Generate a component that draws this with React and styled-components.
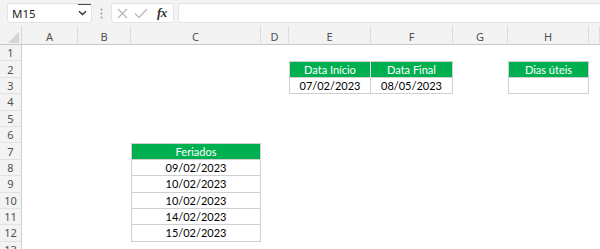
import React from "react";
import styled, { createGlobalStyle } from "styled-components";

const Global = createGlobalStyle`
  html, body { margin: 0; padding: 0; background: #ffffff; }
  body { width: 600px; height: 249px; overflow: hidden; font-family: "Noto Sans", "Open Sans", sans-serif; }
`;

const Page = styled.div`
  width: 600px;
  height: 249px;
  overflow: hidden;
  background: #ffffff;
`;

const Toolbar = styled.div`
  height: 26px;
  background: #f3f3f3;
  display: flex;
  align-items: flex-start;
  padding: 3px 0 0 7px;
  box-sizing: border-box;
  gap: 0;
`;

const NameBox = styled.div`
  position: relative;
  width: 85px;
  height: 20px;
  box-sizing: border-box;
  background: #ffffff;
  border: 1px solid #e3e3e3;
  border-radius: 3px;
  display: flex;
  align-items: center;
  justify-content: space-between;
  padding: 0 4px 0 4px;
  font-family: "Noto Sans", sans-serif;
  font-size: 11.5px;
  color: #262626;
`;

const NameTick = styled.div`
  position: absolute;
  top: 0;
  left: 70px;
  width: 13px;
  height: 1px;
  background: #4a4a4a;
`;

const Dots = styled.div`
  width: 19px;
  height: 20px;
  display: flex;
  align-items: center;
  justify-content: center;
`;

const FuncBox = styled.div`
  width: 63px;
  height: 20px;
  box-sizing: border-box;
  background: #ffffff;
  border: 1px solid #e3e3e3;
  border-radius: 3px;
  display: flex;
  align-items: center;
  padding: 0 0 0 5px;
  gap: 6px;
`;

const Fx = styled.span`
  font-family: "Liberation Serif", "DejaVu Serif", serif;
  font-style: italic;
  font-weight: bold;
  font-size: 13px;
  color: #333;
  margin-left: 3px;
  letter-spacing: -0.5px;
`;

const FormulaBar = styled.div`
  flex: 1;
  height: 20px;
  margin-left: 4px;
  box-sizing: border-box;
  background: #ffffff;
  border: 1px solid #e3e3e3;
  border-right: none;
  border-radius: 3px 0 0 3px;
`;

const Sheet = styled.div`
  display: grid;
  grid-template-columns: 22px 56px 53px 130px 28px 82px 82px 55px 81px 1fr;
  grid-template-rows: 19px repeat(13, 16.4px);
`;

const Corner = styled.div`
  background: #f3f3f3;
  border-bottom: 1px solid #c8c8c8;
  border-right: 1px solid #d6d6d6;
  box-sizing: border-box;
  display: flex;
  align-items: flex-end;
  justify-content: flex-end;
  padding: 0 2px 1px 0;
`;

const ColHead = styled.div`
  background: #f3f3f3;
  border-bottom: 1px solid #c8c8c8;
  border-right: 1px solid #dcdcdc;
  box-sizing: border-box;
  display: flex;
  align-items: center;
  justify-content: center;
  padding-top: 3px;
  font-family: "Noto Sans", sans-serif;
  font-size: 11px;
  color: #505050;
`;

const RowHead = styled.div`
  background: #f3f3f3;
  border-right: 1px solid #d0d0d0;
  border-bottom: 1px solid #e2e2e2;
  box-sizing: border-box;
  display: flex;
  align-items: center;
  justify-content: center;
  font-family: "Noto Sans", sans-serif;
  font-size: 11px;
  color: #505050;
`;

const Cell = styled.div`
  box-sizing: border-box;
  display: flex;
  align-items: center;
  justify-content: center;
  font-family: Lato, "Open Sans", sans-serif;
  font-size: 11px;
  white-space: nowrap;
  overflow: hidden;
  background: ${(p) => (p.$kind === "head" ? "#00b050" : "#ffffff")};
  color: ${(p) => (p.$kind === "head" ? "#ffffff" : "#000000")};
  ${(p) =>
    p.$kind
      ? `
    border-right: 1px solid ${p.$kind === "head" && !p.$lastCol ? "#e8f5ec" : "#d0d0d0"};
    border-bottom: 1px solid #d0d0d0;
    ${p.$firstCol ? "border-left: 1px solid #d0d0d0;" : ""}
    ${p.$firstRow ? "border-top: 1px solid #d0d0d0;" : ""}
  `
      : ""}
`;

const cols = ["A", "B", "C", "D", "E", "F", "G", "H", ""];

// content keyed by "col-row"
const data = {
  "E-2": { t: "Data Início", k: "head", fr: true, fc: true },
  "F-2": { t: "Data Final", k: "head", fr: true, lc: true },
  "E-3": { t: "07/02/2023", k: "body", fc: true },
  "F-3": { t: "08/05/2023", k: "body", lc: true },
  "H-2": { t: "Dias úteis", k: "head", fr: true, fc: true, lc: true },
  "H-3": { t: "", k: "body", fc: true, lc: true },
  "C-7": { t: "Feriados", k: "head", fr: true, fc: true, lc: true },
  "C-8": { t: "09/02/2023", k: "body", fc: true, lc: true },
  "C-9": { t: "10/02/2023", k: "body", fc: true, lc: true },
  "C-10": { t: "10/02/2023", k: "body", fc: true, lc: true },
  "C-11": { t: "14/02/2023", k: "body", fc: true, lc: true },
  "C-12": { t: "15/02/2023", k: "body", fc: true, lc: true },
};

function Chevron() {
  return (
    <svg width="9" height="6" viewBox="0 0 9 6">
      <path d="M1 1.2 L4.5 4.6 L8 1.2" fill="none" stroke="#333" strokeWidth="1.4" />
    </svg>
  );
}

function VDots() {
  return (
    <svg width="3" height="11" viewBox="0 0 3 11">
      <circle cx="1.5" cy="1.5" r="1" fill="#9a9a9a" />
      <circle cx="1.5" cy="5.5" r="1" fill="#9a9a9a" />
      <circle cx="1.5" cy="9.5" r="1" fill="#9a9a9a" />
    </svg>
  );
}

function Cross() {
  return (
    <svg width="11" height="11" viewBox="0 0 11 11">
      <path d="M1 1 L10 10 M10 1 L1 10" stroke="#b4b4b4" strokeWidth="1.1" fill="none" />
    </svg>
  );
}

function Check() {
  return (
    <svg width="14" height="11" viewBox="0 0 14 11">
      <path d="M1 5.5 L5 9.5 L13 1" stroke="#b4b4b4" strokeWidth="1.1" fill="none" />
    </svg>
  );
}

function SelectAll() {
  return (
    <svg width="11" height="11" viewBox="0 0 11 11">
      <path d="M11 0 L11 11 L0 11 Z" fill="#d4d4d4" />
    </svg>
  );
}

export default function App() {
  const rows = Array.from({ length: 13 }, (_, i) => i + 1);
  return (
    <Page>
      <Global />
      <Toolbar>
        <NameBox>
          <span>M15</span>
          <Chevron />
          <NameTick />
        </NameBox>
        <Dots>
          <VDots />
        </Dots>
        <FuncBox>
          <Cross />
          <Check />
          <Fx>fx</Fx>
        </FuncBox>
        <FormulaBar />
      </Toolbar>
      <Sheet>
        <Corner>
          <SelectAll />
        </Corner>
        {cols.map((c, i) => (
          <ColHead key={"h" + i}>{c}</ColHead>
        ))}
        {rows.map((r) => (
          <React.Fragment key={r}>
            <RowHead>{r}</RowHead>
            {cols.map((c, i) => {
              const d = data[c + "-" + r];
              return (
                <Cell
                  key={r + "-" + i}
                  $kind={d ? d.k : undefined}
                  $firstRow={d && d.fr}
                  $firstCol={d && d.fc}
                  $lastCol={d && d.lc}
                >
                  {d ? d.t : ""}
                </Cell>
              );
            })}
          </React.Fragment>
        ))}
      </Sheet>
    </Page>
  );
}
